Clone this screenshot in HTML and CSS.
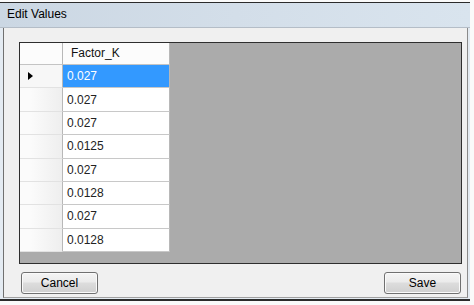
FILE: index.html
```html
<!DOCTYPE html>
<html lang="en">
<head>
  <meta charset="UTF-8">
  <title>Edit Values</title>
  <link rel="stylesheet" href="styles.css">
</head>
<body>

  <div class="window">
    <div class="titlebar">Edit Values</div>

    <div class="client">
      <div class="grid">
        <div class="sheet">
          <div class="corner"></div>
          <div class="colhead">Factor_K</div>

          <div class="rowhead current"><span class="arrow"></span></div>
          <div class="cell selected">0.027</div>

          <div class="rowhead"></div>
          <div class="cell">0.027</div>

          <div class="rowhead"></div>
          <div class="cell">0.027</div>

          <div class="rowhead"></div>
          <div class="cell">0.0125</div>

          <div class="rowhead"></div>
          <div class="cell">0.027</div>

          <div class="rowhead"></div>
          <div class="cell">0.0128</div>

          <div class="rowhead"></div>
          <div class="cell">0.027</div>

          <div class="rowhead"></div>
          <div class="cell">0.0128</div>
        </div>
      </div>

      <div class="buttons">
        <button class="btn">Cancel</button>
        <button class="btn">Save</button>
      </div>
    </div>
  </div>

</body>
</html>
```

FILE: styles.css
```css
body {
  margin: 0;
  width: 474px;
  height: 305px;
  overflow: hidden;
  background-color: #fafafa;
  font-family: "Liberation Sans", Arial, sans-serif;
  font-size: 12px;
  color: #000;
}

.window {
  margin: 2px 4px 0 0;
  border-top: 1px solid #2b2b2b;
  border-bottom: 2px solid #2b2b2b;
  background-color: #e4ebf2;
  padding-bottom: 1px;
}

.titlebar {
  height: 24px;
  line-height: 23px;
  padding-left: 7px;
  background: linear-gradient(to right, #cbd7e3, #d3dee9 50%, #d9e4ee);
  border-bottom: 1px solid #b4bdc7;
}

.client {
  margin: 0 2px 0 3px;
  padding: 14px 5px 3px 15px;
  background-color: #f0f0f0;
  border-left: 1px solid #707070;
  border-right: 1px solid #8a8a8a;
  border-bottom: 1px solid #a0a0a0;
}

.grid {
  height: 222px;
  box-sizing: border-box;
  border: 1px solid #2e2e2e;
  background-color: #ababab;
}

.sheet {
  display: grid;
  grid-template-columns: 43px 107px;
  grid-template-rows: 22px repeat(8, 23.375px);
}

.corner,
.colhead {
  box-sizing: border-box;
  background-color: #fcfcfc;
  border-bottom: 1px solid #c4c4c4;
  border-right: 1px solid #b8b8b8;
}

.colhead {
  padding-left: 8px;
  line-height: 21px;
  color: #111;
}

.rowhead {
  box-sizing: border-box;
  display: flex;
  align-items: center;
  padding-left: 8px;
  background: linear-gradient(to right, #fbfbfb 25%, #eeeeee);
  border-bottom: 1px solid #e2e2e2;
  border-right: 1px solid #b8b8b8;
}

.rowhead.current {
  background: #f7f7f7;
}

.arrow {
  width: 0;
  height: 0;
  border-left: 5px solid #000;
  border-top: 4px solid transparent;
  border-bottom: 4px solid transparent;
}

.cell {
  box-sizing: border-box;
  display: flex;
  align-items: center;
  padding-left: 4px;
  background-color: #fff;
  border-bottom: 1px solid #c8c8c8;
  border-right: 1px solid #b8b8b8;
  color: #222;
}

.cell.selected {
  background-color: #3399ff;
  color: #fff;
}

.buttons {
  display: flex;
  justify-content: space-between;
  margin-top: 8px;
  padding: 0 1px 0 2px;
}

.btn {
  width: 77px;
  height: 22px;
  padding: 0;
  font-family: "Liberation Sans", Arial, sans-serif;
  font-size: 12px;
  color: #000;
  border: 1px solid #707070;
  border-radius: 3px;
  background: linear-gradient(#f4f4f4, #ebebeb 45%, #dddddd 50%, #cfcfcf);
  box-shadow: inset 0 0 0 1px #fafafa;
}
```
